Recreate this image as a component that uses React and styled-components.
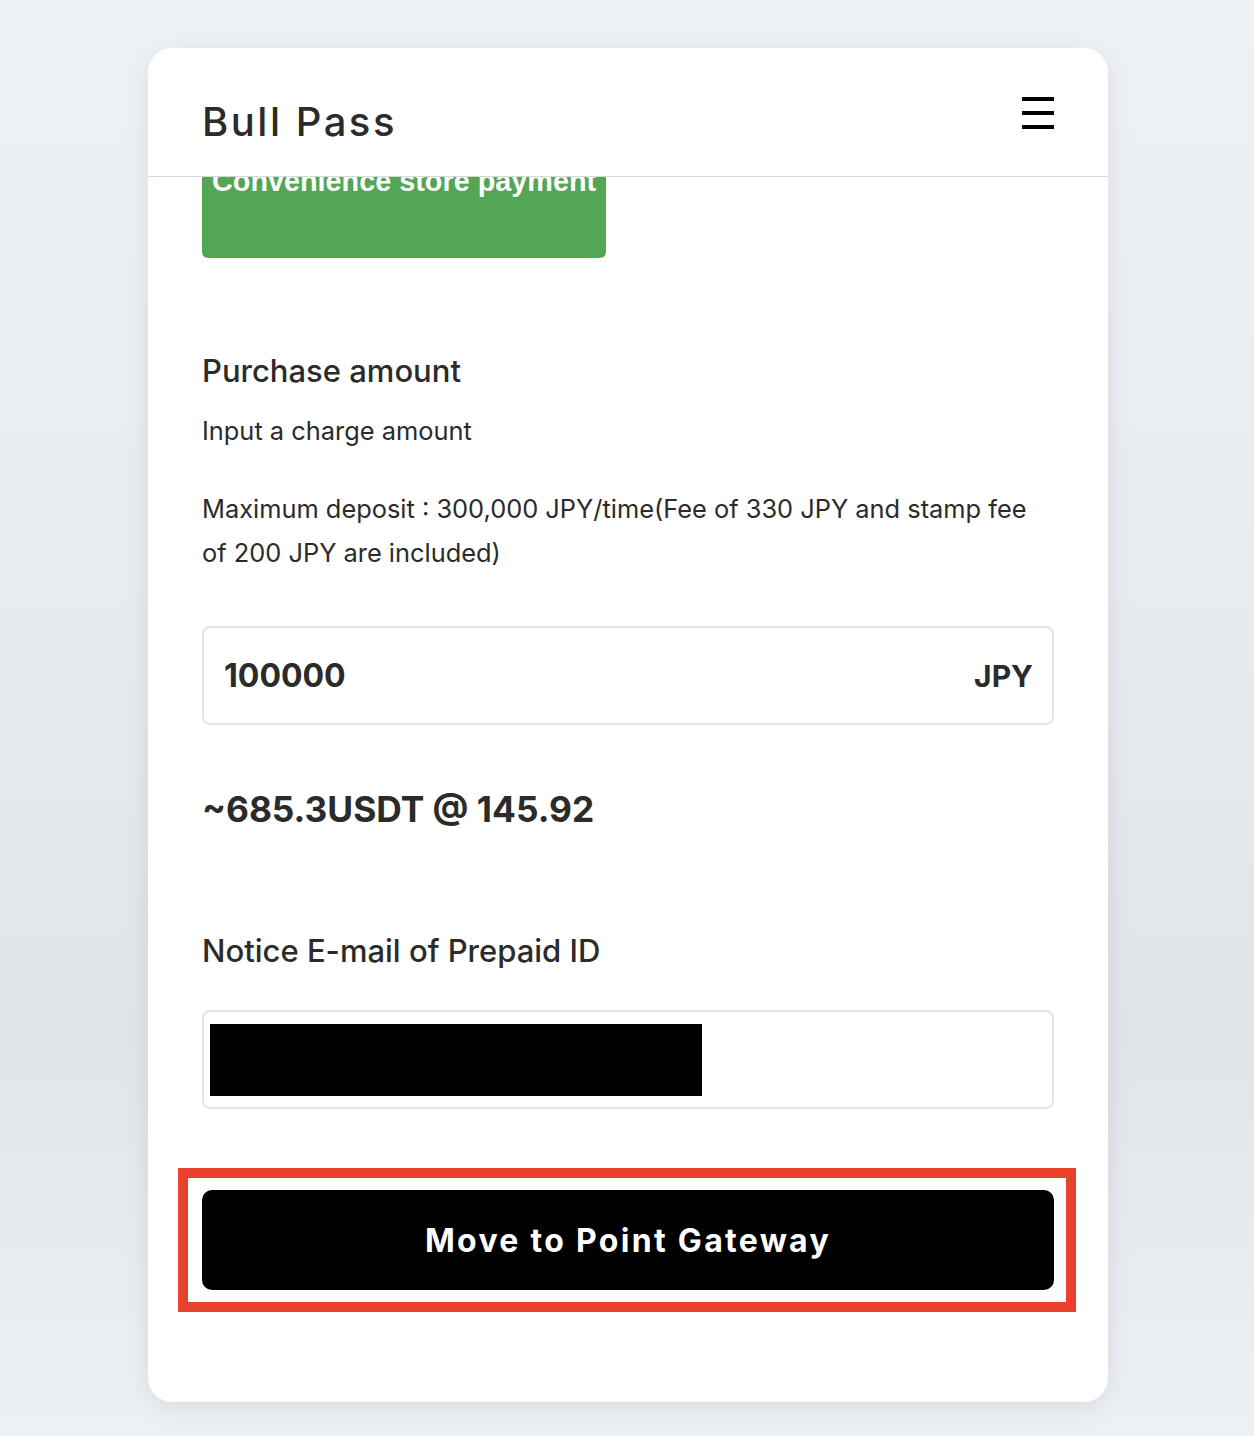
import styled, { createGlobalStyle } from "styled-components";

const GlobalStyle = createGlobalStyle`
  html, body {
    margin: 0;
    padding: 0;
  }
  body {
    font-family: Inter, "Noto Sans", "Liberation Sans", sans-serif;
    color: #2b2b2b;
    background: linear-gradient(180deg, #eff2f5 0%, #e9ecef 40%, #e1e4e8 72%, #eef1f4 100%);
    min-height: 1436px;
  }
`;

const Page = styled.div`
  display: flex;
  justify-content: center;
  padding: 48px 0 0 2px;
  min-height: 1436px;
  box-sizing: border-box;
`;

const Card = styled.div`
  width: 960px;
  height: 1354px;
  background: #fff;
  border-radius: 24px;
  box-shadow: 0 6px 24px rgba(40, 50, 60, 0.1);
  overflow: hidden;
  display: flex;
  flex-direction: column;
`;

const Header = styled.header`
  height: 128px;
  flex-shrink: 0;
  border-bottom: 1px solid #d8d8d8;
  padding: 0 54px;
  display: flex;
  justify-content: space-between;
  align-items: flex-start;
`;

const Brand = styled.h1`
  margin: 50px 0 0;
  font-size: 40px;
  line-height: 48px;
  font-weight: 500;
  letter-spacing: 2.5px;
  color: #2b2b2b;
`;

const Burger = styled.button`
  margin-top: 49px;
  width: 32px;
  height: 32px;
  padding: 0;
  border: none;
  background: none;
  display: flex;
  flex-direction: column;
  justify-content: space-between;

  span {
    display: block;
    height: 4px;
    width: 100%;
    background: #000;
  }
`;

const Body = styled.main`
  flex: 1;
  min-height: 0;
  overflow: hidden;
  padding: 0 54px 112px;
  display: flex;
  flex-direction: column;

  & > * {
    flex-shrink: 0;
  }
`;

const PayMethod = styled.button`
  margin-top: -20px;
  width: 404px;
  height: 101px;
  border: none;
  border-radius: 6px;
  background: #53a653;
  color: #fff;
  font-family: "Liberation Sans", Arial, sans-serif;
  font-weight: 700;
  font-size: 28.8px;
  line-height: 32px;
  padding: 8px 10px;
  text-align: left;
  display: flex;
  align-items: flex-start;
  white-space: nowrap;
`;

const SectionTitle = styled.h2`
  margin: ${(p) => p.$top}px 0 0;
  font-size: 31px;
  line-height: 36px;
  font-weight: 500;
  color: #2b2b2b;
`;

const Note = styled.p`
  margin: ${(p) => p.$top}px 0 0;
  font-size: 25.4px;
  line-height: 44px;
  color: #2b2b2b;
`;

const Field = styled.div`
  margin-top: ${(p) => p.$top}px;
  height: 99px;
  box-sizing: border-box;
  border: 2px solid #e2e5e9;
  border-radius: 8px;
  display: flex;
  align-items: center;
  justify-content: space-between;
  padding: 0 19px 0 20px;
`;

const MailField = styled(Field)`
  align-items: flex-start;
  padding: 12px 6px;
`;

const Amount = styled.span`
  font-size: 32px;
  font-weight: 700;
  color: #2b2b2b;
`;

const Unit = styled.span`
  font-size: 30px;
  font-weight: 700;
  color: #2b2b2b;
`;

const Redacted = styled.span`
  display: block;
  width: 492px;
  height: 72px;
  background: #000;
`;

const Rate = styled.div`
  margin-top: 65px;
  font-size: 35.3px;
  line-height: 40px;
  font-weight: 700;
  color: #2b2b2b;
`;

const Highlight = styled.div`
  margin: 59px -22px 0 -24px;
  border: 10px solid #e8412c;
  padding: 12px 12px 12px 14px;
`;

const Submit = styled.button`
  display: block;
  height: 100px;
  width: 100%;
  border: none;
  border-radius: 10px;
  background: #000;
  color: #fff;
  font-family: Inter, "Liberation Sans", sans-serif;
  font-size: 32px;
  font-weight: 700;
  letter-spacing: 2.3px;
`;

export default function App() {
  return (
    <>
      <GlobalStyle />
      <Page>
        <Card>
          <Header>
            <Brand>Bull Pass</Brand>
            <Burger aria-label="menu">
              <span />
              <span />
              <span />
            </Burger>
          </Header>
          <Body>
            <PayMethod>Convenience store payment</PayMethod>
            <SectionTitle $top={95}>Purchase amount</SectionTitle>
            <Note $top={20}>Input a charge amount</Note>
            <Note $top={34}>
              Maximum deposit : 300,000 JPY/time(Fee of 330 JPY and stamp fee of 200 JPY are included)
            </Note>
            <Field $top={51}>
              <Amount>100000</Amount>
              <Unit>JPY</Unit>
            </Field>
            <Rate>~685.3USDT @ 145.92</Rate>
            <SectionTitle $top={103}>Notice E-mail of Prepaid ID</SectionTitle>
            <MailField $top={41}>
              <Redacted />
            </MailField>
            <Highlight>
              <Submit>Move to Point Gateway</Submit>
            </Highlight>
          </Body>
        </Card>
      </Page>
    </>
  );
}
